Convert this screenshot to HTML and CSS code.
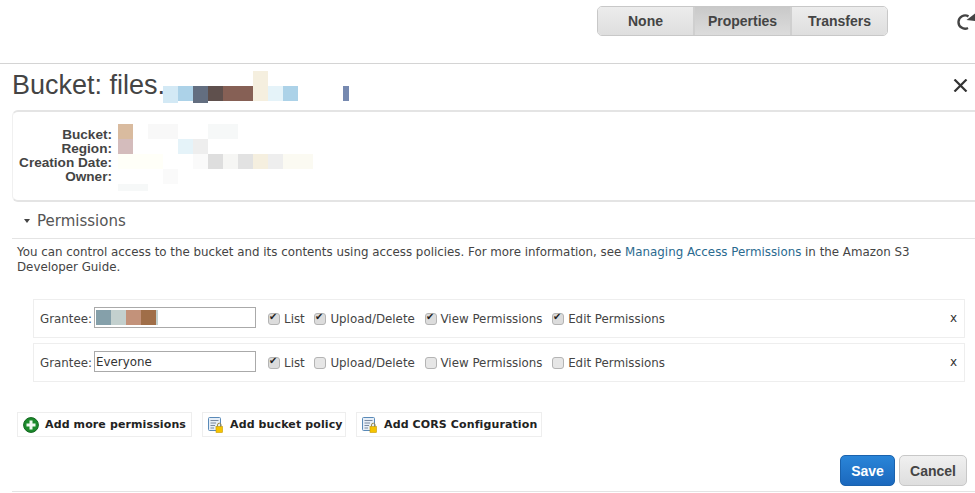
FILE: index.html
```html
<!DOCTYPE html>
<html lang="en">
<head>
    <meta charset="UTF-8">
    <meta name="viewport" content="width=device-width, initial-scale=1.0">
    <title>Bucket properties</title>
    <link rel="stylesheet" href="styles.css">
</head>
<body>
    <div class="topbar">
        <div class="tabs">
            <div class="tab tab-none">None</div>
            <div class="tab tab-props active">Properties</div>
            <div class="tab tab-transfers">Transfers</div>
        </div>
        <svg class="refresh" width="18" height="17" viewBox="0 0 18 17">
            <path d="M11.5 3.4 A6.6 6.6 0 1 0 11 15" fill="none" stroke="#444" stroke-width="2.4"/>
            <path d="M9.5 7 L18 0.5 V8 Z" fill="#444"/>
        </svg>
    </div>

    <div class="title-row">
        <h1>Bucket: files.</h1>
        <div class="title-blur">
            <span class="px w15 low c1"></span>
            <span class="px w15 c2"></span>
            <span class="px w15 low c3"></span>
            <span class="px w15 c4"></span>
            <span class="px w30 c5"></span>
            <span class="px w15 tall c6"></span>
            <span class="px w15 c7"></span>
            <span class="px w15 c2"></span>
            <span class="w45"></span>
            <span class="px w6 c8"></span>
        </div>
        <svg class="close" width="15" height="13" viewBox="0 0 15 13">
            <path d="M1.5 0.5 L13.5 12.5 M13.5 0.5 L1.5 12.5" stroke="#333" stroke-width="2.2"/>
        </svg>
    </div>

    <div class="info">
        <div class="info-labels">
            <div>Bucket:</div>
            <div>Region:</div>
            <div>Creation Date:</div>
            <div>Owner:</div>
        </div>
        <div class="info-values">
            <div class="px-row">
                <span class="px w15 c9"></span><span class="w15"></span>
                <span class="px w30 c10"></span><span class="w30"></span>
                <span class="px w30 c11"></span>
            </div>
            <div class="px-row">
                <span class="px w15 c12"></span><span class="w45"></span>
                <span class="px w15 c7"></span>
                <span class="px w15 c13"></span>
            </div>
            <div class="px-row">
                <span class="px w45 c14"></span><span class="w30"></span>
                <span class="px w15 c15"></span>
                <span class="px w15 c16"></span>
                <span class="px w15 c17"></span>
                <span class="px w15 c18"></span>
                <span class="px w15 c6"></span>
                <span class="px w15 c13"></span>
                <span class="px w30 c19"></span>
            </div>
            <div class="px-row">
                <span class="w45"></span>
                <span class="px w15 c15"></span>
            </div>
            <div class="px-row short">
                <span class="px w30 c11"></span>
            </div>
        </div>
    </div>

    <div class="section-head">
        <span class="arrow"></span>
        <span>Permissions</span>
    </div>
    <p class="intro">You can control access to the bucket and its contents using access policies. For more information, see <a href="#">Managing Access Permissions</a> in the Amazon S3 Developer Guide.</p>

    <div class="grants">
        <div class="grant">
            <label class="grantee">Grantee:</label>
            <div class="grantee-box">
                <span class="px w15 g1"></span>
                <span class="px w15 g2"></span>
                <span class="px w15 g3"></span>
                <span class="px w15 g4"></span>
                <span class="px w2 g2"></span>
            </div>
            <div class="perms">
                <label><input type="checkbox" checked>List</label>
                <label><input type="checkbox" checked>Upload/Delete</label>
                <label><input type="checkbox" checked>View Permissions</label>
                <label><input type="checkbox" checked>Edit Permissions</label>
            </div>
            <span class="remove">x</span>
        </div>
        <div class="grant">
            <label class="grantee">Grantee:</label>
            <input class="grantee-box" type="text" value="Everyone">
            <div class="perms">
                <label><input type="checkbox" checked>List</label>
                <label><input type="checkbox">Upload/Delete</label>
                <label><input type="checkbox">View Permissions</label>
                <label><input type="checkbox">Edit Permissions</label>
            </div>
            <span class="remove">x</span>
        </div>
    </div>

    <div class="adders">
        <div class="add add-more">
            <svg width="16" height="16" viewBox="0 0 16 16">
                <circle cx="8" cy="8" r="7.4" fill="#1c8a2c" stroke="#12661f"/>
                <path d="M8 3.5 V12.5 M3.5 8 H12.5" stroke="#f2faf2" stroke-width="3"/>
            </svg>
            Add more permissions
        </div>
        <div class="add add-policy">
            <svg width="16" height="16" viewBox="0 0 16 16">
                <rect x="0.5" y="0.5" width="12" height="13" rx="1" fill="#e6eef7" stroke="#5a8ab8"/>
                <path d="M2.5 3.5 H10.5 M2.5 6 H8 M2.5 8.5 H7 M2.5 11 H6" stroke="#7a8aa0"/>
                <rect x="8" y="9.5" width="6.5" height="6" fill="#f5c400" stroke="#c79a00" stroke-width="0.6"/>
                <path d="M9.5 9.5 V8 a1.8 1.8 0 0 1 3.6 0 V9.5" fill="none" stroke="#9a8a50"/>
            </svg>
            Add bucket policy
        </div>
        <div class="add add-cors">
            <svg width="16" height="16" viewBox="0 0 16 16">
                <rect x="0.5" y="0.5" width="12" height="13" rx="1" fill="#e6eef7" stroke="#5a8ab8"/>
                <path d="M2.5 3.5 H10.5 M2.5 6 H8 M2.5 8.5 H7 M2.5 11 H6" stroke="#7a8aa0"/>
                <rect x="8" y="9.5" width="6.5" height="6" fill="#f5c400" stroke="#c79a00" stroke-width="0.6"/>
                <path d="M9.5 9.5 V8 a1.8 1.8 0 0 1 3.6 0 V9.5" fill="none" stroke="#9a8a50"/>
            </svg>
            Add CORS Configuration
        </div>
    </div>

    <div class="actions">
        <button class="save">Save</button>
        <button class="cancel">Cancel</button>
    </div>
</body>
</html>
```

FILE: styles.css
```css
html, body {
    margin: 0;
    height: 493px;
    overflow: hidden;
    background: white;
}
body {
    font-family: "DejaVu Sans", sans-serif;
    font-size: 11.85px;
    color: #444;
    width: 975px;
}

/* top bar */
.topbar {
    border-bottom: 1px solid #d4d4d4;
    display: flex;
    padding: 6px 0 0 597px;
    height: 57px;
}
.tabs {
    display: flex;
    height: 28px;
    border: 1px solid #c8c8c8;
    border-radius: 5px;
    overflow: hidden;
}
.tab {
    display: flex;
    align-items: center;
    justify-content: center;
    background: linear-gradient(#ececec, #dedede);
    font: bold 14px "Liberation Sans", sans-serif;
    border-right: 2px solid #cfcfcf;
    box-sizing: border-box;
}
.tab-none { width: 97px; }
.tab-props { width: 97px; }
.tab-transfers { width: 95px; border-right: none; }
.tab.active { background: linear-gradient(#c9c9c9, #dcdcdc); }
.refresh {
    margin: 7px 0 0 69px;
    flex: none;
}

/* title */
.title-row {
    height: 46px;
    display: flex;
    position: relative;
    padding-left: 12px;
}
h1 {
    margin: 0;
    font: normal 27px/42px "Liberation Sans", sans-serif;
    color: #444;
}
.title-blur {
    display: flex;
    align-items: flex-start;
    margin: 22px 0 0 -2px;
}
.close {
    position: absolute;
    left: 953px;
    top: 15px;
}

/* blurred out text */
.px { display: block; height: 15px; flex: none; }
.w2 { width: 2px; flex: none; }
.w6 { width: 6px; flex: none; }
.w15 { width: 15px; flex: none; }
.w30 { width: 30px; flex: none; }
.w45 { width: 45px; flex: none; }
.low { height: 17px; }
.tall { height: 30px; margin-top: -15px; }
.c1 { background: #d3e9f5; }
.c2 { background: #acd2e8; }
.c3 { background: #636e80; }
.c4 { background: #5f504d; }
.c5 { background: #866055; }
.c6 { background: #f5efdf; }
.c7 { background: #e5f3f9; }
.c8 { background: #7689b0; }
.c9 { background: #d9bb9f; }
.c10 { background: #f8f8f8; }
.c11 { background: #f6f8f8; }
.c12 { background: #d4bcbc; }
.c13 { background: #eeeeee; }
.c14 { background: #fffff8; }
.c15 { background: #fafafa; }
.c16 { background: #dedede; }
.c17 { background: #f6f6f4; }
.c18 { background: #e2e2e2; }
.c19 { background: #fbfaf2; }
.g1 { background: #85a0aa; }
.g2 { background: #c3d0ce; }
.g3 { background: #c3927a; }
.g4 { background: #a06e48; }

/* bucket info */
.info {
    margin-left: 12px;
    height: 88px;
    border-top: 2px solid #e4e4e4;
    border-bottom: 2px solid #e4e4e4;
    border-left: 1px solid #f0f0f0;
    border-radius: 6px 0 0 6px;
    display: flex;
}
.info-labels {
    width: 99px;
    padding-top: 16px;
    text-align: right;
    font: bold 13.6px/14px "Liberation Sans", sans-serif;
}
.info-values {
    padding: 12px 0 0 6px;
}
.px-row { display: flex; height: 15px; }
.px-row.short { height: 7px; }
.px-row.short .px { height: 7px; }

/* permissions */
.section-head {
    margin-left: 12px;
    height: 37px;
    box-sizing: border-box;
    border-bottom: 1px solid #e4e4e4;
    display: flex;
    align-items: center;
    padding: 1px 0 0 12px;
    font-size: 15px;
    color: #555;
}
.arrow {
    width: 0;
    height: 0;
    border-left: 3.5px solid transparent;
    border-right: 3.5px solid transparent;
    border-top: 4px solid #444;
    margin-right: 7px;
}
.intro {
    margin: 6px 40px 0 17px;
    line-height: 15px;
    height: 30px;
}
.intro a {
    color: #2a6a8f;
    text-decoration: none;
}
.grants {
    margin: 24px 10px 0 33px;
    display: flex;
    flex-direction: column;
    gap: 5px;
}
.grant {
    height: 39px;
    box-sizing: border-box;
    border: 1px solid #eeeeee;
    display: flex;
    align-items: center;
    padding-left: 6px;
}
.grantee { margin-right: 2px; }
.grantee-box {
    width: 162px;
    height: 21px;
    box-sizing: border-box;
    border: 1px solid #aaa;
    display: flex;
    align-items: center;
    padding: 0 1px;
    font: 11.85px "DejaVu Sans", sans-serif;
    color: #333;
    margin: 0 0 2px;
}
.perms {
    display: flex;
    gap: 9.7px;
    margin-left: 12px;
}
.perms label {
    display: flex;
    align-items: center;
}
.perms input {
    appearance: none;
    width: 12px;
    height: 12px;
    margin: 0 4px 0 0;
    border: 1px solid #b4b4b4;
    border-radius: 3px;
    background: #e6e6e6;
    position: relative;
}
.perms input:checked {
    background: #dcdcdc;
}
.perms input:checked::after {
    content: "\2714";
    position: absolute;
    left: 0;
    top: -3px;
    font-size: 10px;
    color: #222;
}
.remove {
    margin: 0 7px 2px auto;
    font-size: 12px;
    color: #333;
}

/* add buttons */
.adders {
    display: flex;
    gap: 10px;
    margin: 30px 0 0 17px;
}
.add {
    height: 25px;
    box-sizing: border-box;
    border: 1px solid #eeeeee;
    display: flex;
    align-items: center;
    gap: 6px;
    padding: 0 0 0 5px;
    font-weight: bold;
    font-size: 11px;
    letter-spacing: 0.12px;
    color: #222;
    white-space: nowrap;
}
.add-more { width: 175px; }
.add-policy { width: 144px; }
.add-cors { width: 186px; }

/* save and cancel */
.actions {
    display: flex;
    justify-content: flex-end;
    gap: 4px;
    margin: 18px 0 0 12px;
    padding: 0 8px 5px 0;
    border-bottom: 1px solid #e4e4e4;
}
.actions button {
    height: 31px;
    border-radius: 5px;
    font: bold 14px "Liberation Sans", sans-serif;
    padding: 0;
}
.save {
    width: 55px;
    border: 1px solid #1a62ad;
    background: linear-gradient(#2a85d8, #1b68bd);
    color: white;
}
.cancel {
    width: 68px;
    border: 1px solid #c8c8c8;
    background: linear-gradient(#f0f0f0, #dedede);
    color: #444;
}
```
